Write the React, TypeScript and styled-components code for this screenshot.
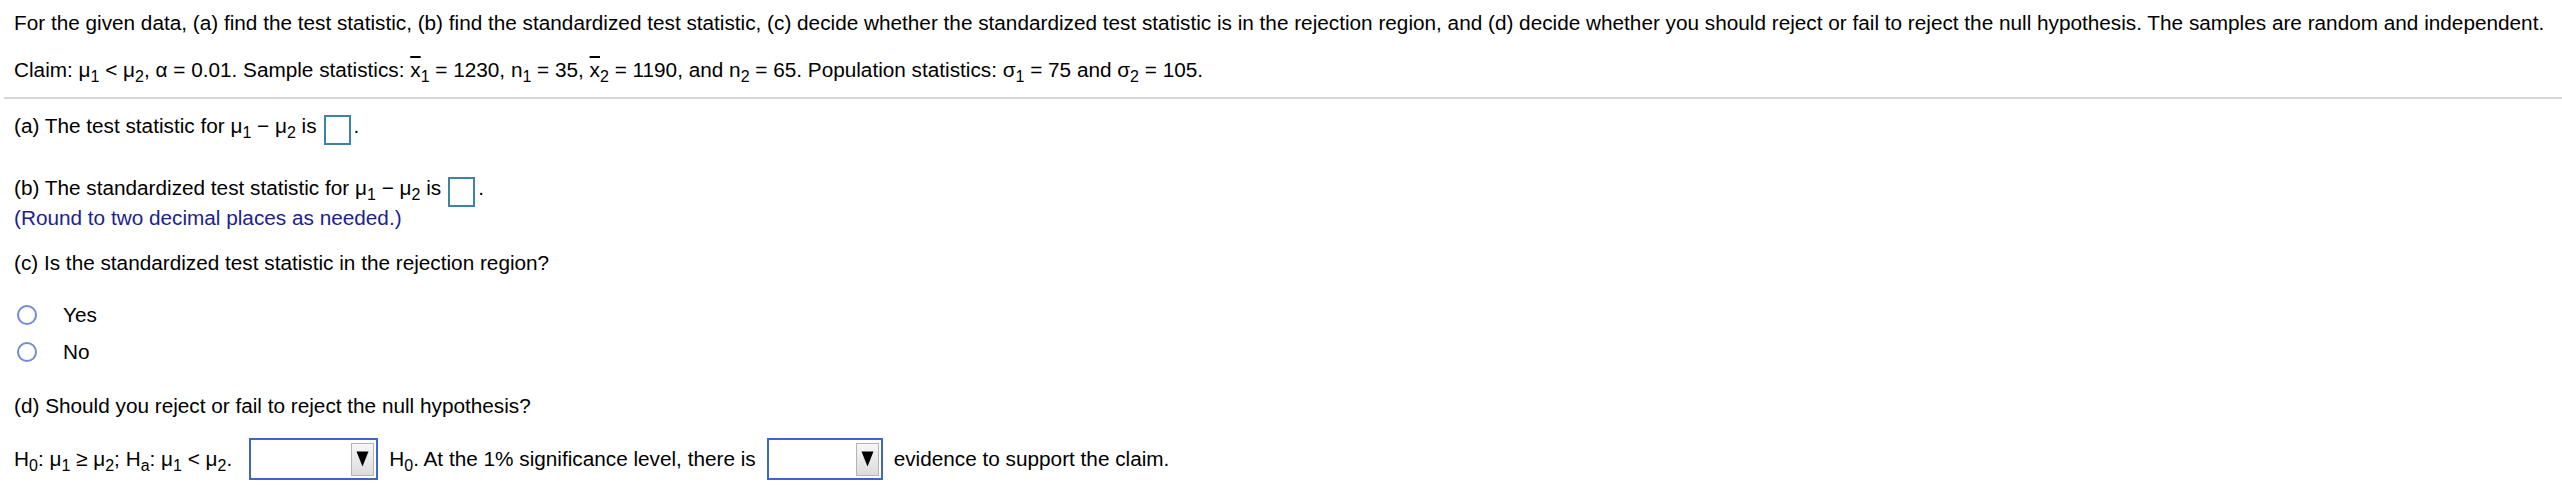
import React from 'react';
import styled, {createGlobalStyle} from 'styled-components';

const GlobalStyle = createGlobalStyle`
  html, body {
    margin: 0;
    padding: 0;
    background: #fff;
  }
  body {
    font-family: "Liberation Sans", Arial, sans-serif;
    font-size: 20.75px;
    color: #000;
  }
`;

const Page = styled.div`
  width: 2562px;
  padding-top: 9px;
`;

const Intro = styled.div`
  padding-left: 14px;
`;

const Line = styled.div<{ $gap?: number }>`
  line-height: 28px;
  white-space: nowrap;
  margin-top: ${props => props.$gap ?? 0}px;
`;

const Divider = styled.hr`
  border: none;
  height: 2px;
  background: #d3d6df;
  margin: 13px 0 0 4px;
`;

const Body = styled.div`
  padding-left: 14px;
`;

const Hint = styled(Line)`
  color: #1c2290;
`;

const Sub = styled.sub`
  font-size: 16px;
  vertical-align: -5px;
  line-height: 0;
`;

const Bar = styled.span`
  text-decoration: overline;
`;

const AnswerBox = styled.span`
  display: inline-block;
  width: 23px;
  height: 26px;
  border: 2px solid #3f82a4;
  vertical-align: -12px;
  margin: 0 3px 0 7px;
`;

const Options = styled.div`
  margin-top: 24px;
  display: flex;
  flex-direction: column;
  gap: 9px;
`;

const Option = styled.label`
  display: flex;
  align-items: center;
  height: 28px;
  padding-left: 3px;
`;

const Radio = styled.span`
  width: 16px;
  height: 16px;
  border-radius: 50%;
  border: 2px solid #7489d6;
  background: #fff;
  margin-right: 26px;
`;

const Row = styled.div`
  display: flex;
  align-items: center;
  white-space: nowrap;
  height: 44px;
  margin-top: 17px;
`;

const Dropdown = styled.span<{ $width: number; $lead: number }>`
  display: inline-flex;
  justify-content: flex-end;
  align-items: center;
  box-sizing: border-box;
  width: ${props => props.$width}px;
  height: 42px;
  border: 2px solid #3b67c6;
  background: #fff;
  padding-right: 2px;
  margin: 0 11px 0 ${props => props.$lead}px;
`;

const ArrowButton = styled.span`
  display: flex;
  align-items: center;
  justify-content: center;
  box-sizing: border-box;
  width: 23px;
  height: 33px;
  border: 1px solid #b4b4b4;
  background: linear-gradient(#f7f7f7, #dcdcdc);
`;

const Mu = ({n}: { n: number }) => <>μ<Sub>{n}</Sub></>;

const Select = ({width, lead}: { width: number; lead: number }) => (
  <Dropdown $width={width} $lead={lead}>
    <ArrowButton>
      <svg width="13" height="16" viewBox="0 0 13 16">
        <polygon points="0.5,0.5 12.5,0.5 6.5,15.5" fill="#000"/>
      </svg>
    </ArrowButton>
  </Dropdown>
);

export default function App() {
  return (
    <Page>
      <GlobalStyle/>
      <Intro>
        <Line>
          For the given data, (a) find the test statistic, (b) find the standardized test statistic, (c) decide whether the standardized test statistic is in the rejection region, and (d) decide whether you should reject or fail to reject the null hypothesis. The samples are random and independent.
        </Line>
        <Line $gap={19}>
          Claim: <Mu n={1}/> &lt; <Mu n={2}/>, α = 0.01. Sample statistics: <Bar>x</Bar><Sub>1</Sub> = 1230, n<Sub>1</Sub> = 35, <Bar>x</Bar><Sub>2</Sub> = 1190, and n<Sub>2</Sub> = 65. Population statistics: σ<Sub>1</Sub> = 75 and σ<Sub>2</Sub> = 105.
        </Line>
      </Intro>
      <Divider/>
      <Body>
        <Line $gap={13}>
          (a) The test statistic for <Mu n={1}/> − <Mu n={2}/> is<AnswerBox/>.
        </Line>
        <Line $gap={29}>
          (b) The standardized test statistic for <Mu n={1}/> − <Mu n={2}/> is<AnswerBox/>.
        </Line>
        <Hint $gap={-3}>(Round to two decimal places as needed.)</Hint>
        <Line $gap={17}>(c) Is the standardized test statistic in the rejection region?</Line>
        <Options>
          <Option><Radio/>Yes</Option>
          <Option><Radio/>No</Option>
        </Options>
        <Line $gap={26}>(d) Should you reject or fail to reject the null hypothesis?</Line>
        <Row>
          <span>H<Sub>0</Sub>: <Mu n={1}/> ≥ <Mu n={2}/>; H<Sub>a</Sub>: <Mu n={1}/> &lt; <Mu n={2}/>.</span>
          <Select width={129} lead={17}/>
          <span>H<Sub>0</Sub>. At the 1% significance level, there is</span>
          <Select width={116} lead={11}/>
          <span>evidence to support the claim.</span>
        </Row>
      </Body>
    </Page>
  );
}
